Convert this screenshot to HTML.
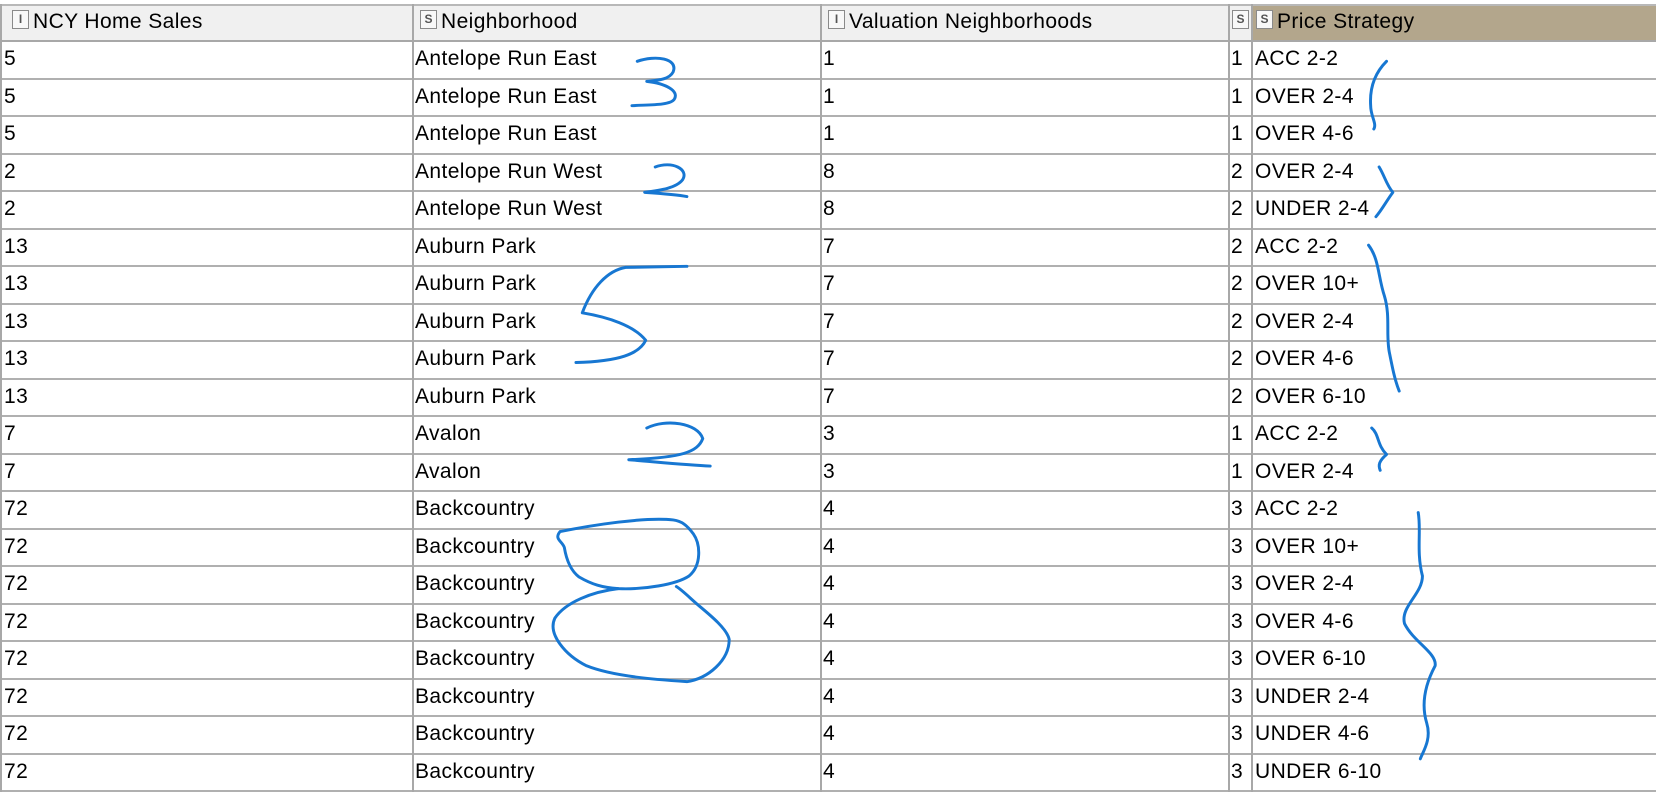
<!DOCTYPE html>
<html><head><meta charset="utf-8"><style>
html,body{margin:0;padding:0;background:#fff;}
body{width:1656px;height:792px;overflow:hidden;position:relative;font-family:Tahoma,"Liberation Sans","DejaVu Sans",sans-serif;font-size:21px;letter-spacing:0.4px;color:#000;}
.hdr{position:absolute;top:4px;left:0;width:1656px;height:38px;background:#f0f0f0;border-top:2px solid #b8b8b8;border-bottom:2px solid #a8a8a8;box-sizing:border-box;}
.tan{position:absolute;top:4px;left:1252px;width:404px;height:38px;background:#b3a68c;border-top:2px solid #b8b8b8;border-bottom:2px solid #a8a8a8;box-sizing:border-box;}
.vl{position:absolute;top:4px;width:2px;height:788px;background:#a8a8a8;}
.r{position:absolute;left:0;width:1656px;height:37.5px;border-bottom:2px solid #b0b0b0;box-sizing:border-box;}
.r span{position:absolute;top:-1px;white-space:nowrap;line-height:36px;}
.r span:nth-child(1){left:4px}.r span:nth-child(2){left:415px}.r span:nth-child(3){left:823px}.r span:nth-child(4){left:1231px}.r span:nth-child(5){left:1255px}
.ic{position:absolute;top:10px;width:15px;height:17px;border:1px solid #8a8a8a;background:#f8f8f8;font-size:12px;letter-spacing:0;line-height:17px;text-align:center;color:#555;font-weight:bold;}
.ht{position:absolute;top:3px;line-height:38px;white-space:nowrap;}
</style></head><body>
<div class="hdr"></div><div class="tan"></div>
<div class="ic" style="left:12px">I</div><div class="ht" style="left:33px">NCY Home Sales</div>
<div class="ic" style="left:420px">S</div><div class="ht" style="left:441px">Neighborhood</div>
<div class="ic" style="left:828px">I</div><div class="ht" style="left:849px">Valuation Neighborhoods</div>
<div class="ic" style="left:1232px">S</div>
<div class="ic" style="left:1256px">S</div><div class="ht" style="left:1277px">Price Strategy</div>
<div class="r" style="top:42px"><span>5</span><span>Antelope Run East</span><span>1</span><span>1</span><span>ACC 2-2</span></div>
<div class="r" style="top:79.5px"><span>5</span><span>Antelope Run East</span><span>1</span><span>1</span><span>OVER 2-4</span></div>
<div class="r" style="top:117px"><span>5</span><span>Antelope Run East</span><span>1</span><span>1</span><span>OVER 4-6</span></div>
<div class="r" style="top:154.5px"><span>2</span><span>Antelope Run West</span><span>8</span><span>2</span><span>OVER 2-4</span></div>
<div class="r" style="top:192px"><span>2</span><span>Antelope Run West</span><span>8</span><span>2</span><span>UNDER 2-4</span></div>
<div class="r" style="top:229.5px"><span>13</span><span>Auburn Park</span><span>7</span><span>2</span><span>ACC 2-2</span></div>
<div class="r" style="top:267px"><span>13</span><span>Auburn Park</span><span>7</span><span>2</span><span>OVER 10+</span></div>
<div class="r" style="top:304.5px"><span>13</span><span>Auburn Park</span><span>7</span><span>2</span><span>OVER 2-4</span></div>
<div class="r" style="top:342px"><span>13</span><span>Auburn Park</span><span>7</span><span>2</span><span>OVER 4-6</span></div>
<div class="r" style="top:379.5px"><span>13</span><span>Auburn Park</span><span>7</span><span>2</span><span>OVER 6-10</span></div>
<div class="r" style="top:417px"><span>7</span><span>Avalon</span><span>3</span><span>1</span><span>ACC 2-2</span></div>
<div class="r" style="top:454.5px"><span>7</span><span>Avalon</span><span>3</span><span>1</span><span>OVER 2-4</span></div>
<div class="r" style="top:492px"><span>72</span><span>Backcountry</span><span>4</span><span>3</span><span>ACC 2-2</span></div>
<div class="r" style="top:529.5px"><span>72</span><span>Backcountry</span><span>4</span><span>3</span><span>OVER 10+</span></div>
<div class="r" style="top:567px"><span>72</span><span>Backcountry</span><span>4</span><span>3</span><span>OVER 2-4</span></div>
<div class="r" style="top:604.5px"><span>72</span><span>Backcountry</span><span>4</span><span>3</span><span>OVER 4-6</span></div>
<div class="r" style="top:642px"><span>72</span><span>Backcountry</span><span>4</span><span>3</span><span>OVER 6-10</span></div>
<div class="r" style="top:679.5px"><span>72</span><span>Backcountry</span><span>4</span><span>3</span><span>UNDER 2-4</span></div>
<div class="r" style="top:717px"><span>72</span><span>Backcountry</span><span>4</span><span>3</span><span>UNDER 4-6</span></div>
<div class="r" style="top:754.5px"><span>72</span><span>Backcountry</span><span>4</span><span>3</span><span>UNDER 6-10</span></div>
<div class="vl" style="left:0"></div><div class="vl" style="left:412px"></div><div class="vl" style="left:820px"></div><div class="vl" style="left:1228px"></div><div class="vl" style="left:1251px"></div>
<svg style="position:absolute;left:0;top:0" width="1656" height="792" viewBox="0 0 1567 749.4" fill="none" stroke="#1777d2" stroke-width="2.8" stroke-linecap="round" stroke-linejoin="round">
<path d="M603,58 C620,52 642,55 637,68 C633,76 620,76 612,77 C630,79 643,86 638,94 C634,100 612,99 598,100"/>
<path d="M620,158 C636,152 652,160 646,170 C640,178 625,180 610,182 C625,183 640,184 650,186"/>
<path d="M650,252 L592,253 C575,256 560,272 551,296 C575,300 600,308 611,322 C605,335 585,342 545,343"/>
<path d="M612,405 C630,396 660,400 665,415 C660,428 645,433 595,435 C620,437 650,440 672,441"/>
<path d="M637,492 C610,489 560,497 530,503 C524,510 532,512 534,518 C536,530 540,540 548,546 C560,553 570,556 585,557 C610,558 640,553 652,545 C664,535 663,515 656,505 C650,497 645,493 637,492"/>
<path d="M585,557 C560,560 535,570 525,585 C518,600 535,620 555,630 C580,640 620,643 650,645 C670,642 690,625 690,605 C688,595 672,582 660,572 C652,565 645,558 640,555"/>
<path d="M1312,58 C1300,70 1296,85 1297,100 C1297,110 1303,117 1300,122"/>
<path d="M1305,158 C1310,166 1312,175 1318,182 C1312,190 1308,198 1302,205"/>
<path d="M1295,232 C1305,245 1304,262 1310,280 C1316,300 1311,318 1315,335 C1318,350 1320,360 1324,370"/>
<path d="M1298,405 C1305,411 1303,421 1312,430 C1305,436 1304,440 1306,445"/>
<path d="M1342,485 C1345,502 1340,522 1346,545 C1346,562 1325,574 1329,590 C1338,608 1360,618 1358,630 C1350,645 1344,664 1350,684 C1355,700 1346,712 1344,718"/>
</svg>
</body></html>
